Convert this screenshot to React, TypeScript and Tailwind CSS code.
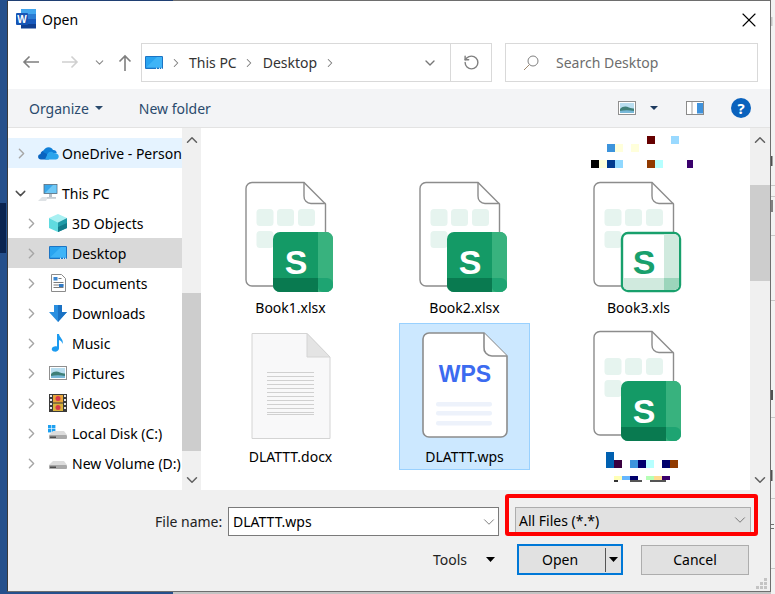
import { ChevronDown, ChevronRight, ChevronUp, RotateCcw, X } from "lucide-react";
import type { ReactNode } from "react";

const UI_FONT = "font-['Noto_Sans','Open_Sans',sans-serif]";

const Chevron = ({ open }: { open?: boolean }) =>
  open ? (
    <ChevronDown size={17} strokeWidth={2} className="shrink-0 text-[#4d4d4d]" />
  ) : (
    <ChevronRight size={17} strokeWidth={2} className="shrink-0 text-[#a6a6a6]" />
  );

const DesktopIcon = () => (
  <svg width="18" height="14" viewBox="0 0 18 14">
    <rect x="0" y="0" width="18" height="13" rx="1" fill="#1c74c4" />
    <rect x="1" y="1" width="16" height="10.5" fill="#29a4f0" />
    <path d="M1 11.5 L12 1 H17 V11.5 Z" fill="#3fb4f7" />
    <rect x="11" y="11.8" width="1" height="1" fill="#fff" />
    <rect x="14" y="11.8" width="1" height="1" fill="#fff" />
    <rect x="16" y="11.8" width="1" height="1" fill="#fff" />
  </svg>
);

const PictureIcon = ({ w = 18, h = 14 }: { w?: number; h?: number }) => (
  <svg width={w} height={h} viewBox="0 0 18 14">
    <rect x="0.5" y="0.5" width="17" height="13" fill="#fff" stroke="#8f8f8f" />
    <rect x="2" y="2" width="14" height="10" fill="#b9def0" />
    <path d="M2 8 C5 5 8 5 11 6.5 C13 7.3 15 7.5 16 7.5 V12 H2 Z" fill="#3f7f78" />
    <path d="M2 10 C6 9 11 9 16 10 V12 H2 Z" fill="#78b8d8" />
  </svg>
);

const DiskIcon = ({ windows }: { windows?: boolean }) => (
  <svg width="20" height="16" viewBox="0 0 20 16">
    {windows && (
      <g fill="#1ea0f0">
        <rect x="0" y="0" width="3.4" height="3.4" />
        <rect x="4" y="0" width="3.4" height="3.4" />
        <rect x="0" y="4" width="3.4" height="3.4" />
        <rect x="4" y="4" width="3.4" height="3.4" />
      </g>
    )}
    <path d="M1 10 L5 6 H16 L19 10 Z" fill="#dcdcdc" />
    <rect x="1" y="10" width="18" height="4" rx="1" fill="#a9a9a9" />
    <rect x="2" y="11.5" width="6" height="1.5" fill="#4c4c4c" />
  </svg>
);

const navIcons: Record<string, ReactNode> = {
  OneDrive: (
    <svg width="22" height="14" viewBox="0 0 22 14">
      <path d="M4 13.5 C0.5 13.5 0 8.5 3.5 8 C4 4.5 8 3.5 10 6 L12 13.5 Z" fill="#0a64c0" />
      <path d="M6 6 C7 1 14 -0.5 16 4 C18 3.8 19.5 5 19.8 7 L12 9 Z" fill="#0f7fd8" />
      <path d="M8 13.5 L11 7 C13 5 16 5.5 17 7.5 C20 6.8 22.5 9 21.5 11.5 C21.2 12.8 20 13.5 19 13.5 Z" fill="#2aa4ec" />
    </svg>
  ),
  "This PC": (
    <svg width="20" height="18" viewBox="0 0 20 18">
      <rect x="6" y="0.5" width="13" height="9" fill="#39a7ea" stroke="#5d6d7a" strokeWidth="0.8" />
      <path d="M7 9 L15 1 H18.5 V9 Z" fill="#70c8f5" />
      <rect x="11" y="10" width="3" height="3" fill="#b8c0c8" />
      <path d="M0 17 L4 13 H10 L8 17 Z" fill="#dfe3e6" />
      <rect x="9" y="13" width="9" height="1.8" fill="#c5ccd2" />
    </svg>
  ),
  "3D Objects": (
    <svg width="18" height="18" viewBox="0 0 18 18">
      <path d="M9 0 L18 4 L9 8.5 L0 4 Z" fill="#a8f0f2" />
      <path d="M0 4 L9 8.5 V18 L0 14 Z" fill="#5fdbe0" />
      <path d="M18 4 L9 8.5 V18 L18 14 Z" fill="#1f9ba8" />
      <path d="M9 13 L18 9 V14 L9 18 Z" fill="#127b8a" />
    </svg>
  ),
  Desktop: <DesktopIcon />,
  Documents: (
    <svg width="15" height="18" viewBox="0 0 15 18">
      <path d="M0.5 0.5 H10.5 L14.5 4.5 V17.5 H0.5 Z" fill="#fff" stroke="#8b8b8b" />
      <rect x="2.5" y="3" width="4" height="3.5" fill="#3a86d0" />
      <g fill="#7b7b7b">
        <rect x="7.5" y="4" width="3" height="1" />
        <rect x="2.5" y="8" width="10" height="1" />
        <rect x="2.5" y="10.5" width="10" height="1" />
        <rect x="2.5" y="13" width="10" height="1" />
      </g>
      <rect x="8" y="10" width="4.5" height="3" fill="#2e7ac6" />
    </svg>
  ),
  Downloads: (
    <svg width="18" height="17" viewBox="0 0 18 17">
      <path d="M5 0 H13 V7 H18 L9 17 L0 7 H5 Z" fill="#2a8fe0" />
      <path d="M9 0 H13 V7 H18 L9 17 Z" fill="#1a72c4" />
    </svg>
  ),
  Music: (
    <svg width="14" height="18" viewBox="0 0 14 18">
      <path d="M6 0 H8 C8.5 4 13 5 11.5 10 C11 7.5 9.5 6.5 8 6 V14.5 C8 17 5 18 3 17.5 C0.5 17 0 14.5 2 13 C3.5 12 5 12 6 12.5 Z" fill="#1c9bf0" />
    </svg>
  ),
  Pictures: <PictureIcon />,
  Videos: (
    <svg width="18" height="18" viewBox="0 0 18 18">
      <rect width="18" height="18" fill="#3a3a3a" />
      <g fill="#e8e8e8">
        <rect x="1" y="1" width="2" height="2" />
        <rect x="1" y="5" width="2" height="2" />
        <rect x="1" y="9" width="2" height="2" />
        <rect x="1" y="13" width="2" height="2" />
        <rect x="15" y="1" width="2" height="2" />
        <rect x="15" y="5" width="2" height="2" />
        <rect x="15" y="9" width="2" height="2" />
        <rect x="15" y="13" width="2" height="2" />
      </g>
      <rect x="4" y="1" width="10" height="7.5" fill="#e7a53a" />
      <rect x="4" y="9.5" width="10" height="7.5" fill="#d9b23c" />
      <circle cx="9" cy="4.5" r="2.5" fill="#d83a4a" />
      <circle cx="9" cy="13.5" r="2.5" fill="#d83a4a" />
    </svg>
  ),
  "Local Disk (C:)": <DiskIcon windows />,
  "New Volume (D:)": <DiskIcon />,
};

const navRows = [
  { label: "3D Objects" },
  { label: "Desktop", active: true },
  { label: "Documents" },
  { label: "Downloads" },
  { label: "Music" },
  { label: "Pictures" },
  { label: "Videos" },
  { label: "Local Disk (C:)" },
  { label: "New Volume (D:)" },
];

const SheetBadge = ({ light }: { light?: boolean }) =>
  light ? (
    <g>
      <rect x="31" y="52" width="58" height="58" rx="6" fill="#fff" stroke="#18a06c" strokeWidth="2.4" />
      <path d="M73 53 H83 A5 5 0 0 1 88 58 V97 H73 Z" fill="#d0eade" />
      <path d="M32 97 H88 V104 A5 5 0 0 1 83 109 H37 A5 5 0 0 1 32 104 Z" fill="#d0eade" />
      <path d="M73 97 H88 V104 A5 5 0 0 1 83 109 H73 Z" fill="#9bd5bb" />
      <text x="53" y="93" textAnchor="middle" fontFamily="Liberation Sans, sans-serif" fontWeight="700" fontSize="34" fill="#18a06c">S</text>
    </g>
  ) : (
    <g>
      <rect x="30" y="51" width="60" height="60" rx="7" fill="#149a66" />
      <path d="M75 51 H83 A7 7 0 0 1 90 58 V104 A7 7 0 0 1 83 111 H75 Z" fill="#38b27e" />
      <path d="M30 97 H75 V111 H37 A7 7 0 0 1 30 104 Z" fill="#097a50" />
      <path d="M75 97 H84 A6 6 0 0 1 90 103 V104 A7 7 0 0 1 83 111 H80 A5 5 0 0 1 75 106 Z" fill="#1ea472" />
      <text x="53" y="93" textAnchor="middle" fontFamily="Liberation Sans, sans-serif" fontWeight="700" fontSize="34" fill="#fff">S</text>
    </g>
  );

const SheetIcon = ({ light }: { light?: boolean }) => (
  <svg width="96" height="112" viewBox="0 0 96 112">
    <path
      d="M9 1.5 H61 L82.5 23 V100 A5 5 0 0 1 77.5 105 H9 A6 6 0 0 1 3 99 V7.5 A6 6 0 0 1 9 1.5 Z"
      fill="#fff"
      stroke="#8c8c8c"
      strokeWidth="1.4"
    />
    <path d="M61 1.5 V15 A7 7 0 0 0 68 22.5 H82.5" fill="none" stroke="#8c8c8c" strokeWidth="1.4" />
    <g fill="#e6f4ef">
      <rect x="13.5" y="28" width="17" height="17" rx="3.5" />
      <rect x="34" y="28" width="17" height="17" rx="3.5" />
      <rect x="55" y="28" width="17" height="17" rx="3.5" />
      <rect x="13.5" y="50" width="17" height="17" rx="3.5" />
    </g>
    <SheetBadge light={light} />
  </svg>
);

const WpsIcon = () => (
  <svg width="86" height="106" viewBox="0 0 86 106">
    <path
      d="M7 1 H62 L85 24 V99 A6 6 0 0 1 79 105 H7 A6 6 0 0 1 1 99 V7 A6 6 0 0 1 7 1 Z"
      fill="#fff"
      stroke="#8c8c8c"
      strokeWidth="1.6"
    />
    <path d="M62 1 V15 A8 8 0 0 0 70 24 H85" fill="#fff" stroke="#8c8c8c" strokeWidth="1.6" />
    <text x="43" y="50" textAnchor="middle" fontFamily="Liberation Sans, sans-serif" fontWeight="700" fontSize="23" fill="#3c6bf0">
      WPS
    </text>
    <g fill="#edf2fb">
      <rect x="14" y="70" width="56" height="4.5" rx="2" />
      <rect x="14" y="79" width="56" height="4.5" rx="2" />
      <rect x="14" y="89" width="56" height="4.5" rx="2" />
    </g>
  </svg>
);

const DocxIcon = () => (
  <svg width="80" height="106" viewBox="0 0 80 106">
    <path d="M1 0.5 H56 L79 24 V105.5 H1 Z" fill="#f8f8f9" stroke="#d4d4d4" />
    <path d="M56 0.5 V24 H79 Z" fill="#e4e4e4" stroke="#d4d4d4" />
    <g fill="#d0d0d0">
      {[39, 43, 47, 51, 55, 59, 63, 67, 71, 75, 79, 81].map((y) => (
        <rect key={y} x="16" y={y} width="47" height="1" />
      ))}
    </g>
  </svg>
);

const Mosaic = ({ w, h, cells }: { w: number; h: number; cells: [number, number, number, number, string][] }) => (
  <svg width={w} height={h} viewBox={`0 0 ${w} ${h}`}>
    {cells.map(([x, y, cw, ch, fill]) => (
      <rect key={`${x}-${y}`} x={x} y={y} width={cw} height={ch} fill={fill} />
    ))}
  </svg>
);

const FileCell = ({
  icon,
  label,
  selected,
  cellClass,
  iconClass,
}: {
  icon: ReactNode;
  label: ReactNode;
  selected?: boolean;
  cellClass: string;
  iconClass: string;
}) => (
  <div
    className={`flex w-[131px] flex-col items-center border ${cellClass} ${
      selected ? "border-[#99d1ff] bg-[#cce8ff]" : "border-transparent"
    }`}
  >
    <div className={`flex shrink-0 items-start ${iconClass}`}>{icon}</div>
    <div className="flex-1 pt-[5px] text-[14px] leading-5 text-black">{label}</div>
  </div>
);

const Scrollbar = ({ width, thumbTop, thumbHeight }: { width: string; thumbTop: string; thumbHeight: string }) => (
  <div className={`flex h-full flex-col items-center bg-[#f0f0f0] ${width}`}>
    <div className="flex h-[24px] w-full shrink-0 items-center justify-center">
      <ChevronUp size={18} strokeWidth={2} className="text-[#606060]" />
    </div>
    <div className={`w-full shrink-0 ${thumbTop}`} />
    <div className={`w-full shrink-0 bg-[#cdcdcd] ${thumbHeight}`} />
    <div className="flex-1" />
    <div className="flex h-[20px] w-full shrink-0 items-center justify-center">
      <ChevronDown size={18} strokeWidth={2} className="text-[#606060]" />
    </div>
  </div>
);

export default function App() {
  return (
    <div className={`flex h-[594px] w-[775px] overflow-hidden bg-[#f2f2f2] ${UI_FONT}`}>
      <div className="flex w-[7px] shrink-0 flex-col bg-[#25508c]">
        <div className="mt-[203px] h-[50px] w-[6px] bg-[#0a2450]" />
      </div>

      <div className="flex w-[764px] shrink-0 flex-col">
        <div className="flex h-px shrink-0">
          <div className="w-[166px] bg-[#1f3f73]" />
          <div className="flex-1 bg-[#6e6e6e]" />
        </div>

        <div className="flex h-[591px] shrink-0 flex-col border-r border-b border-l border-[#6e6e6e] border-l-[#3a3a3a] bg-white">
          {/* title bar */}
          <div className="flex h-[38px] shrink-0 items-center pr-[9px] pl-[8px]">
            <svg width="21" height="20" viewBox="0 0 21 20" className="mb-[2px]">
              <rect x="5" y="0" width="15" height="19" rx="1" fill="#2b7cd3" />
              <rect x="5" y="0" width="15" height="5" fill="#41a5ee" />
              <rect x="5" y="10" width="15" height="5" fill="#185abd" />
              <rect x="5" y="15" width="15" height="4.5" fill="#103f91" />
              <rect x="0" y="4" width="12" height="12" rx="1" fill="#1655b5" />
              <text x="6" y="13.6" textAnchor="middle" fontFamily="Liberation Sans, sans-serif" fontWeight="700" fontSize="10" fill="#fff">
                W
              </text>
            </svg>
            <span className="mb-[2px] ml-[5px] text-[14px] text-black">Open</span>
            <X size={24} strokeWidth={1.1} className="ml-auto text-black" />
          </div>

          {/* nav row */}
          <div className="flex h-[50px] shrink-0 items-start pt-[4px]">
            <div className="flex h-[38px] w-[133px] shrink-0 items-center pl-[14px] text-[#7f7f7f]">
              <svg width="18" height="14" viewBox="0 0 18 14" fill="none" stroke="currentColor" strokeWidth="1.6">
                <path d="M17 7 H2 M7.5 1.5 L2 7 L7.5 12.5" />
              </svg>
              <svg width="18" height="14" viewBox="0 0 18 14" fill="none" stroke="#d0d0d0" strokeWidth="1.6" className="ml-[21px]">
                <path d="M1 7 H16 M10.5 1.5 L16 7 L10.5 12.5" />
              </svg>
              <ChevronDown size={13} strokeWidth={2} className="ml-[14px] text-[#8a8a8a]" />
              <svg width="14" height="18" viewBox="0 0 14 18" fill="none" stroke="currentColor" strokeWidth="1.6" className="mt-[2px] ml-[12px]">
                <path d="M7 17 V2 M1.5 7.5 L7 2 L12.5 7.5" />
              </svg>
            </div>
            <div className="flex h-[39px] w-[351px] shrink-0 items-center border border-[#d9d9d9] text-[14px]">
              <div className="flex items-center pl-[3px]">
                <DesktopIcon />
                <ChevronRight size={14} strokeWidth={1.8} className="ml-[6px] text-[#7a7a7a]" />
                <span className="ml-[6px] text-[#333]">This PC</span>
                <ChevronRight size={14} strokeWidth={1.8} className="ml-[5px] text-[#7a7a7a]" />
                <span className="ml-[7px] text-[#333]">Desktop</span>
                <ChevronRight size={14} strokeWidth={1.8} className="ml-[6px] text-[#7a7a7a]" />
              </div>
              <div className="ml-auto flex h-full w-[40px] items-center justify-center">
                <ChevronDown size={16} strokeWidth={2} className="text-[#777]" />
              </div>
              <div className="flex h-full w-[41px] items-center justify-center border-l border-[#d9d9d9]">
                <RotateCcw size={17} strokeWidth={2} className="text-[#808080]" />
              </div>
            </div>
            <div className="ml-[13px] flex h-[39px] w-[253px] shrink-0 items-center border border-[#d9d9d9] pl-[17px] text-[14px] text-[#6d6d6d]">
              <svg width="16" height="16" viewBox="0 0 16 16" fill="none" stroke="#808080" strokeWidth="1">
                <circle cx="10" cy="6" r="5" />
                <path d="M6.4 9.6 L1 15" stroke="#a08a70" />
              </svg>
              <span className="ml-[17px]">Search Desktop</span>
            </div>
          </div>

          {/* toolbar */}
          <div className="flex h-[39px] shrink-0 items-center border-b border-[#e3e3e3] bg-[#f3f4f6] pr-[19px] pl-[21px] text-[14px] text-[#2a4a6d]">
            <span>Organize</span>
            <svg width="8" height="4" viewBox="0 0 8 4" className="ml-[6px]">
              <path d="M0 0 H8 L4 4 Z" fill="#2a4a6d" />
            </svg>
            <span className="ml-[36px]">New folder</span>
            <div className="ml-auto flex items-center">
              <PictureIcon w={18} h={14} />
              <svg width="8" height="4" viewBox="0 0 8 4" className="ml-[14px]">
                <path d="M0 0 H8 L4 4 Z" fill="#1d3a5f" />
              </svg>
              <svg width="18" height="14" viewBox="0 0 18 14" className="ml-[28px]">
                <rect x="0.5" y="0.5" width="17" height="13" fill="#fff" stroke="#8a8a8a" />
                <rect x="11" y="2" width="6" height="10.5" fill="#3f92dc" />
                <rect x="5.5" y="1" width="1" height="12" fill="#a0a0a0" />
              </svg>
              <div className="ml-[27px] flex h-[20px] w-[20px] items-center justify-center rounded-full bg-[#0a62bd] text-[15px] leading-none font-bold text-white">
                ?
              </div>
            </div>
          </div>

          {/* main */}
          <div className="flex h-[362px] shrink-0">
            <div className="flex h-full w-[174px] shrink-0 flex-col overflow-hidden pt-[10px] text-[14px] text-black">
              <div className="flex h-[30px] shrink-0 items-center bg-[#e5f3ff] pl-[5px] whitespace-nowrap">
                <Chevron />
                <span className="ml-[7px] flex w-[22px] shrink-0 justify-center">{navIcons.OneDrive}</span>
                <span className="ml-[3px]">OneDrive - Person</span>
              </div>
              <div className="mt-[10px] flex h-[30px] shrink-0 items-center pl-[4px] whitespace-nowrap">
                <Chevron open />
                <span className="ml-[8px] flex w-[22px] shrink-0 justify-center">{navIcons["This PC"]}</span>
                <span className="ml-[3px]">This PC</span>
              </div>
              {navRows.map((row) => (
                <div
                  key={row.label}
                  className={`flex h-[30px] shrink-0 items-center pl-[15px] whitespace-nowrap ${row.active ? "bg-[#d9d9d9]" : ""}`}
                >
                  <Chevron />
                  <span className="ml-[8px] flex w-[20px] shrink-0 justify-center">{navIcons[row.label]}</span>
                  <span className="ml-[4px]">{row.label}</span>
                </div>
              ))}
            </div>

            <Scrollbar width="w-[19px] shrink-0" thumbTop="h-[141px]" thumbHeight="h-[158px]" />
            <div className="w-[2px] shrink-0" />

            <div className="flex min-w-0 flex-1 flex-col overflow-hidden pl-[22px]">
              <div className="grid h-[47px] shrink-0 grid-cols-[131px_131px_131px] gap-x-[43px]">
                <div />
                <div />
                <div className="pt-[8px] pl-[18px]">
                  <Mosaic
                    w={104}
                    h={33}
                    cells={[
                      [56, 0, 8, 8, "#660000"],
                      [80, 0, 8, 8, "#99d9ff"],
                      [16, 8, 8, 8, "#3d94dc"],
                      [24, 8, 8, 8, "#ffffdb"],
                      [40, 8, 8, 8, "#ffffdb"],
                      [0, 24, 8, 8, "#000000"],
                      [8, 24, 8, 8, "#ffffdb"],
                      [16, 24, 8, 8, "#003a90"],
                      [24, 24, 8, 8, "#90d8ff"],
                      [56, 24, 8, 8, "#903a00"],
                      [64, 24, 8, 8, "#b6ffff"],
                      [96, 24, 6, 8, "#3a006c"],
                    ]}
                  />
                </div>
              </div>
              <div className="grid grid-cols-[131px_131px_131px] gap-x-[43px]">
                <FileCell cellClass="h-[148px]" iconClass="h-[117px] pt-[5px]" icon={<SheetIcon />} label="Book1.xlsx" />
                <FileCell cellClass="h-[148px]" iconClass="h-[117px] pt-[5px]" icon={<SheetIcon />} label="Book2.xlsx" />
                <FileCell cellClass="h-[148px]" iconClass="h-[117px] pt-[5px]" icon={<SheetIcon light />} label="Book3.xls" />
                <FileCell cellClass="h-[147px]" iconClass="h-[118px] pt-[9px]" icon={<DocxIcon />} label="DLATTT.docx" />
                <FileCell cellClass="h-[147px]" iconClass="h-[118px] pt-[8px]" icon={<WpsIcon />} label="DLATTT.wps" selected />
                <FileCell
                  cellClass="h-[147px]"
                  iconClass="h-[118px] pt-[6px]"
                  icon={<SheetIcon />}
                  label={
                    <div className="mt-[5px] ml-[7px]">
                      <Mosaic
                        w={72}
                        h={32}
                        cells={[
                          [0, 0, 8, 16, "#0060b0"],
                          [8, 8, 8, 8, "#3a0040"],
                          [24, 8, 8, 8, "#3d94dc"],
                          [32, 8, 8, 8, "#00006c"],
                          [40, 8, 8, 8, "#b6ffff"],
                          [56, 8, 8, 8, "#00006c"],
                          [64, 8, 8, 8, "#903a00"],
                          [8, 24, 8, 4, "#ffffb6"],
                          [16, 24, 8, 4, "#66b6ff"],
                          [24, 24, 8, 4, "#00006c"],
                          [40, 24, 8, 4, "#b6ffb6"],
                          [48, 24, 8, 4, "#ffdb90"],
                          [56, 24, 8, 4, "#3a006c"],
                          [8, 28, 4, 2, "#333333"],
                          [24, 28, 12, 2, "#555555"],
                          [44, 28, 16, 2, "#555555"],
                        ]}
                      />
                    </div>
                  }
                />
              </div>
            </div>

            <Scrollbar width="w-[20px] shrink-0" thumbTop="h-[33px]" thumbHeight="h-[96px]" />
          </div>

          {/* footer */}
          <div className="relative flex flex-1 flex-col bg-[#f0f0f0] text-[14px] text-black">
            <div className="flex h-[46px] shrink-0 items-end pl-[147px]">
              <span className="mb-[4px] w-[73px] shrink-0 whitespace-nowrap text-[#222]">File name:</span>
              <div className="flex h-[29px] w-[271px] shrink-0 items-center justify-between border border-[#7a7a7a] bg-white pl-[4px]">
                <span>DLATTT.wps</span>
                <ChevronDown size={18} strokeWidth={1} className="text-[#555]" />
              </div>
              <div className="ml-[6px] flex h-[42px] w-[253px] shrink-0 items-end rounded-[3px] border-4 border-[#ff0000] pt-[9px] pr-[3px] pl-[6px]">
                <div className="flex h-full w-full items-center justify-between border border-b-0 border-[#adadad] bg-[#e1e1e1] pr-[1px] pl-[3px]">
                  <span>All Files (*.*)</span>
                  <ChevronDown size={18} strokeWidth={1} className="text-[#555]" />
                </div>
              </div>
            </div>
            <div className="mt-[8px] flex h-[31px] items-center pl-[425px]">
              <span className="w-[35px] text-[#222]">Tools</span>
              <svg width="9" height="5" viewBox="0 0 9 5" className="ml-[18px]">
                <path d="M0 0 H9 L4.5 5 Z" fill="#000" />
              </svg>
              <div className="ml-[22px] flex h-[31px] w-[106px] items-center border-2 border-[#0078d7] bg-[#e1e1e1]">
                <span className="flex-1 pr-[4px] text-center">Open</span>
                <span className="h-[24px] w-px bg-[#555]" />
                <svg width="9" height="5" viewBox="0 0 9 5" className="mx-[3px]">
                  <path d="M0 0 H9 L4.5 5 Z" fill="#000" />
                </svg>
              </div>
              <div className="ml-[18px] flex h-[30px] w-[108px] items-center justify-center border border-[#adadad] bg-[#e1e1e1]">
                Cancel
              </div>
            </div>
            <svg width="12" height="12" viewBox="0 0 12 12" className="absolute right-[2px] bottom-[1px]">
              <g fill="#c4c4c4">
                <rect x="8" y="0" width="3" height="3" />
                <rect x="4" y="4" width="3" height="3" />
                <rect x="8" y="4" width="3" height="3" />
                <rect x="0" y="8" width="3" height="3" />
                <rect x="4" y="8" width="3" height="3" />
                <rect x="8" y="8" width="3" height="3" />
              </g>
            </svg>
          </div>
        </div>

        <div className="flex flex-1">
          <div className="w-[166px] bg-[#25508c]" />
          <div className="flex-1 bg-[#c4c4c4]" />
        </div>
      </div>

      {/* sliver of the window behind */}
      <svg width="4" height="594" viewBox="0 0 4 594" className="shrink-0">
        <g fill="#c8c8c8">
          <rect y="185" width="4" height="1" />
          <rect y="196" width="4" height="1" />
          <rect y="235" width="4" height="1" />
          <rect y="300" width="4" height="1" />
          <rect y="417" width="4" height="1" />
          <rect y="498" width="4" height="1" />
          <rect y="568" width="4" height="1" />
        </g>
        <rect x="0" y="17" width="1.5" height="9" fill="#c4c4c4" />
        <rect x="0" y="156" width="1.5" height="10" fill="#505050" />
        <rect x="0" y="200" width="2" height="12" fill="#808080" />
        <rect x="0" y="390" width="2" height="10" fill="#505050" />
        <rect x="0" y="470" width="1.5" height="11" fill="#505050" />
        <rect x="0" y="524" width="3" height="1" fill="#707070" />
        <rect x="0" y="528" width="3" height="1" fill="#707070" />
      </svg>
    </div>
  );
}
